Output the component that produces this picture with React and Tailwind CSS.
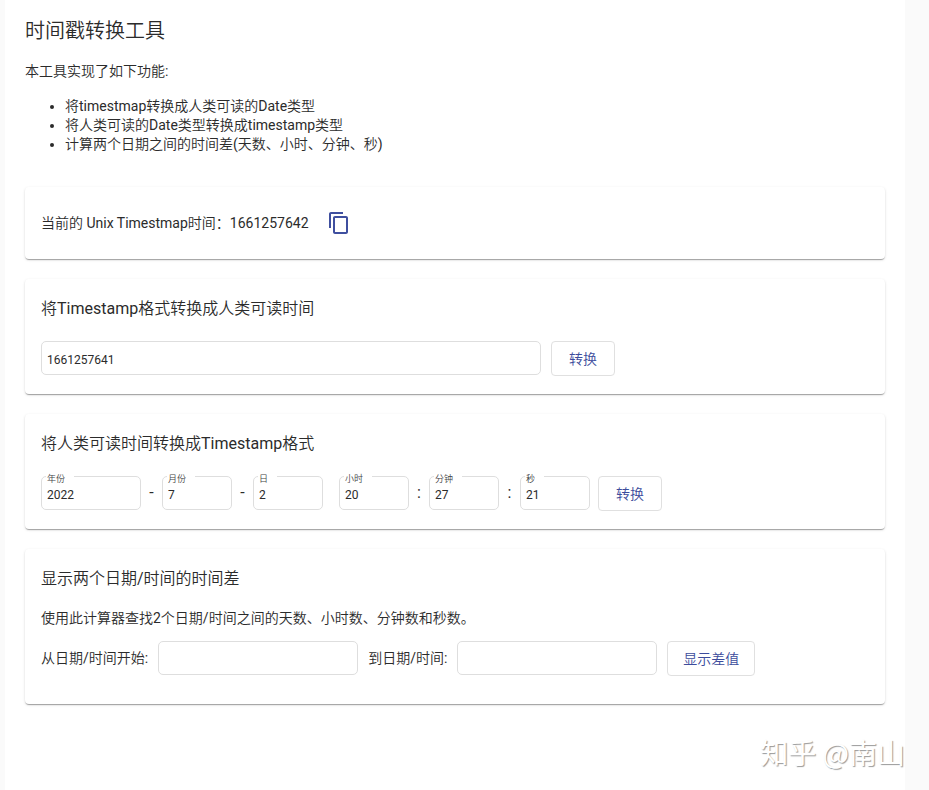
import { useState } from "react";

const CARD =
  "rounded bg-white px-4 shadow-[0_2px_1px_-1px_rgba(0,0,0,0.2),0_1px_1px_0_rgba(0,0,0,0.14),0_1px_3px_0_rgba(0,0,0,0.12)]";
const FIELD =
  "h-[34px] rounded-[5px] border border-[#dedede] bg-white px-[5px] text-xs outline-none focus:border-[#3f51b5]";

function OutlineButton({ children }) {
  return (
    <button
      type="button"
      className="h-[35px] min-w-16 rounded border border-[#e0e0e0] bg-white px-[15px] text-sm text-[#3c4c9c]"
    >
      {children}
    </button>
  );
}

function DatePart({ id, label, value, wide }) {
  const [text, setText] = useState(value);
  return (
    <div className={wide ? "relative w-[100px]" : "relative w-[70px]"}>
      <label
        htmlFor={id}
        className="absolute -top-[3px] left-[5px] bg-white pr-[9px] pl-px text-[9px] leading-3 text-[#444]"
      >
        {label}
      </label>
      <input
        id={id}
        value={text}
        onChange={(e) => setText(e.target.value)}
        className={FIELD + " w-full pt-1"}
      />
    </div>
  );
}

function Separator({ children, narrow }) {
  return (
    <span
      className={
        narrow
          ? "w-5 text-center text-base leading-[34px]"
          : "w-[21px] text-center text-base leading-[34px]"
      }
    >
      {children}
    </span>
  );
}

function CopyIcon() {
  return (
    <svg viewBox="0 0 24 24" className="size-6 fill-[#3f4f9f]" aria-hidden="true">
      <path d="M16 1H4c-1.1 0-2 .9-2 2v14h2V3h12V1zm3 4H8c-1.1 0-2 .9-2 2v14c0 1.1.9 2 2 2h11c1.1 0 2-.9 2-2V7c0-1.1-.9-2-2-2zm0 16H8V7h11v14z" />
    </svg>
  );
}

export default function App() {
  const [stamp, setStamp] = useState("1661257641");
  return (
    <div className="min-h-screen bg-[#fafafa] pr-6 pl-[5px] font-[Roboto,'Noto_Sans_CJK_SC_DemiLight','Noto_Sans_CJK_SC_Light','Noto_Sans_CJK_SC',sans-serif] text-sm text-[#2b2b2b]">
      <main className="flex min-h-screen flex-col bg-white px-5 pt-[17px]">
        <h1 className="text-xl leading-7">时间戳转换工具</h1>
        <p className="mt-4 leading-5">本工具实现了如下功能:</p>
        <ul className="mt-4 list-disc pl-10 leading-[19px]">
          <li>将timestmap转换成人类可读的Date类型</li>
          <li>将人类可读的Date类型转换成timestamp类型</li>
          <li>计算两个日期之间的时间差(天数、小时、分钟、秒)</li>
        </ul>

        <div className="mt-[33px] flex flex-col gap-5">
          <section className={CARD + " flex items-center py-4"}>
            <p>当前的 Unix Timestmap时间：1661257642</p>
            <button
              type="button"
              aria-label="复制"
              className="ml-[10px] flex size-10 items-center justify-center"
            >
              <CopyIcon />
            </button>
          </section>

          <section className={CARD + " pt-[18px] pb-[18px]"}>
            <h2 className="text-base leading-6">
              <label htmlFor="stamp">将Timestamp格式转换成人类可读时间</label>
            </h2>
            <div className="mt-5 flex flex-wrap gap-[10px]">
              <input
                id="stamp"
                value={stamp}
                onChange={(e) => setStamp(e.target.value)}
                className={FIELD + " w-[500px] pt-1"}
              />
              <OutlineButton>转换</OutlineButton>
            </div>
          </section>

          <section className={CARD + " pt-[18px] pb-[18px]"}>
            <h2 className="text-base leading-6">将人类可读时间转换成Timestamp格式</h2>
            <div className="mt-5 flex flex-wrap items-start">
              <DatePart id="year" label="年份" value="2022" wide />
              <Separator>-</Separator>
              <DatePart id="month" label="月份" value="7" />
              <Separator>-</Separator>
              <DatePart id="day" label="日" value="2" />
              <div className="w-4" />
              <DatePart id="hour" label="小时" value="20" />
              <Separator narrow>:</Separator>
              <DatePart id="minute" label="分钟" value="27" />
              <Separator>:</Separator>
              <DatePart id="second" label="秒" value="21" />
              <div className="w-2" />
              <OutlineButton>转换</OutlineButton>
            </div>
          </section>

          <section className={CARD + " pt-[18px] pb-7"}>
            <h2 className="text-base leading-6">显示两个日期/时间的时间差</h2>
            <p className="mt-[17px] leading-5">
              使用此计算器查找2个日期/时间之间的天数、小时数、分钟数和秒数。
            </p>
            <div className="mt-[13px] flex flex-wrap items-start gap-[10px] leading-[34px]">
              <label htmlFor="from">从日期/时间开始:</label>
              <input id="from" className={FIELD + " w-[200px]"} />
              <label htmlFor="to">到日期/时间:</label>
              <input id="to" className={FIELD + " w-[200px]"} />
              <OutlineButton>显示差值</OutlineButton>
            </div>
          </section>
        </div>

        <p className="-mr-5 mt-7 self-end font-['Noto_Sans_CJK_SC',sans-serif] text-[28px] leading-10 whitespace-nowrap text-white [text-shadow:1px_1px_1px_#999]">
          知乎 @南山
        </p>
      </main>
    </div>
  );
}
